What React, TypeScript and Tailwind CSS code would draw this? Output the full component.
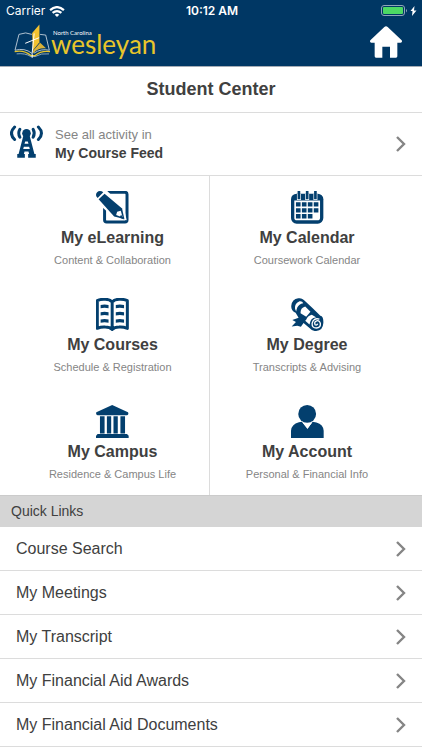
import type { ReactNode } from "react";

const tiles = [
  { title: "My eLearning", text: "Content & Collaboration", icon: <PencilIcon /> },
  { title: "My Calendar", text: "Coursework Calendar", icon: <CalendarIcon /> },
  { title: "My Courses", text: "Schedule & Registration", icon: <BookIcon /> },
  { title: "My Degree", text: "Transcripts & Advising", icon: <DiplomaIcon /> },
  { title: "My Campus", text: "Residence & Campus Life", icon: <CampusIcon /> },
  { title: "My Account", text: "Personal & Financial Info", icon: <PersonIcon /> },
];

const links = [
  "Course Search",
  "My Meetings",
  "My Transcript",
  "My Financial Aid Awards",
  "My Financial Aid Documents",
];

function Icon({ children }: { children: ReactNode }) {
  return (
    <svg viewBox="0 0 100 100" className="size-[33px] shrink-0 text-[#033f6e]" fill="currentColor" aria-hidden="true">
      {children}
    </svg>
  );
}

function TowerIcon() {
  return (
    <Icon>
      <circle cx="50" cy="25" r="13" />
      <path d="M41 30h18l15 58h4v11H55V88h3l-2-8H44l-2 8h3v11H22V88h4z" />
      <path d="M46 50h8l2 7H44zM42 66h16l2 7H40z" fill="#fff" />
      <g fill="none" stroke="currentColor" strokeWidth="9" strokeLinecap="round">
        <path d="M30 13q-7 12 0 24M70 13q7 12 0 24" />
        <path d="M14 6Q-5 25 14 44M86 6q19 19 0 38" />
      </g>
    </Icon>
  );
}

function PencilIcon() {
  return (
    <Icon>
      <path d="M28 4h60q6 0 6 6v78q0 6-6 6H32q-6 0-6-6V46" fill="none" stroke="currentColor" strokeWidth="9" />
      <path d="M0 8 28 0h6l50 48 9 41-38-7L0 32z" fill="#fff" />
      <path d="M0 12Q1 1 12 0q6 0 10 4L5 21q-5-4-5-9z" />
      <path d="M8 25 26 8l53 45 7 32-31-8z" />
      <path d="m61 73 3-10 11-3 6 20z" fill="#fff" />
      <path d="m76 72 10 14-15-5z" />
    </Icon>
  );
}

function CalendarIcon() {
  return (
    <Icon>
      <rect x="0" y="8" width="98" height="91" rx="17" />
      <path d="M10 29h78v52q0 8-8 8H18q-8 0-8-8z" fill="#fff" />
      <path d="M18 8h12v19H18zM43 8h12v19H43zM68 8h12v19H68z" fill="#fff" />
      <path d="M20 0h8v25h-8zM45 0h8v25h-8zM70 0h8v25h-8z" />
      <path d="M15 34h14v13H15zM33 34h14v13H33zM51 34h14v13H51zM69 34h14v13H69zM15 52h14v13H15zM33 52h14v13H33zM51 52h14v13H51zM69 52h14v13H69zM15 70h14v13H15zM33 70h14v13H33zM51 70h14v13H51z" />
    </Icon>
  );
}

function BookIcon() {
  return (
    <Icon>
      <path
        d="M49 12Q42 4 28 4 14 3 4 8v84q12-5 24-4 14 0 21 7 7-7 21-7 12-1 25 4V8Q84 3 70 4 56 4 49 12zM49 12v82"
        fill="none"
        stroke="currentColor"
        strokeWidth="9"
        strokeLinejoin="round"
      />
      <path d="M14 21q12-3 24 0v10q-12-3-24 0zM14 43q12-3 24 0v10q-12-3-24 0zM14 65q12-3 24 0v10q-12-3-24 0zM60 21q12-3 25 0v10q-13-3-25 0zM60 43q12-3 25 0v10q-13-3-25 0zM60 65q12-3 25 0v10q-13-3-25 0z" />
    </Icon>
  );
}

function DiplomaIcon() {
  return (
    <Icon>
      <path d="M1 23Q3 4 22 1q10-2 17 5l26 24 24 24q10 2 9 22-1 23-22 24-12 1-20-9L38 76l-8 11-11-3-17 2 13-13-11-6 19-7-9-15Q-1 37 1 23z" />
      <path d="M12 31q-1-15 14-21 9-1 11 6-13 2-18 13-3 8-3 12-3-4-4-10z" fill="#fff" />
      <path d="M43 26 59 42 46 57 29 46q-1-16 14-20z" fill="#fff" />
      <path d="M46 66q4-12 17-15l14 8Q60 57 56 80L43 69z" fill="#fff" />
      <path d="M86 64q-18-5-22 13-1 14 13 14 13-1 12-13-2-11-11-9-9 3-5 12 5 3 8-3" fill="none" stroke="#fff" strokeWidth="4" />
    </Icon>
  );
}

function CampusIcon() {
  return (
    <Icon>
      <path d="M49 0 97 22q3 8-3 9H5q-6-1-4-9z" />
      <path d="M12 34h14v52H12zM33 34h13v52H33zM53 34h13v52H53zM74 34h14v52H74z" />
      <path d="M5 88h89l5 5v7H0v-7z" />
    </Icon>
  );
}

function PersonIcon() {
  return (
    <Icon>
      <circle cx="49" cy="27" r="27" />
      <path d="M0 100V78q1-20 24-26l9-1 17 22 15-22 12 2q21 6 22 25v22z" />
      <path d="M34 52q16 8 31 0L50 71z" fill="#fff" />
    </Icon>
  );
}

function Chevron() {
  return (
    <svg
      viewBox="0 0 10 16"
      className="h-4 w-2.5 shrink-0 self-center"
      fill="none"
      stroke="#858585"
      strokeWidth="2.4"
      aria-hidden="true"
    >
      <path d="m1 1 7 7-7 7" />
    </svg>
  );
}

function StatusBar() {
  return (
    <div className="grid h-5 grid-cols-3 items-center pt-0.5 pr-1 pl-1.5 font-['Inter',sans-serif] text-xs">
      <div className="flex items-center gap-1">
        <span>Carrier</span>
        <svg viewBox="0 0 14 10" className="h-[11px] w-4" fill="none" stroke="currentColor" strokeWidth="2" aria-hidden="true">
          <path d="M.7 3.8q6.3-5.6 12.6 0M3 6.3q4-3.4 8 0" />
          <path d="M7 10 4.9 7.9q2.1-1.6 4.2 0z" fill="currentColor" stroke="none" />
        </svg>
      </div>
      <span className="text-center font-semibold">10:12 AM</span>
      <svg viewBox="0 0 37 12" className="h-3 w-[37px] justify-self-end" aria-hidden="true">
        <rect x="0.5" y="0.5" width="23" height="10" rx="2.5" fill="none" stroke="#8fa5b8" />
        <rect x="2" y="2" width="20" height="7" rx="1" fill="#4cd964" />
        <path d="M25 4q2 1.500 0 3.500z" fill="#8fa5b8" />
        <path d="m33.500 1-4 5h2L31 11l4.500-5.500h-2.500z" fill="#fff" />
      </svg>
    </div>
  );
}

function Logo() {
  return (
    <a href="#" className="flex items-start" aria-label="North Carolina Wesleyan">
      <svg viewBox="0 0 112 105" className="h-[35px] w-[37px]" fill="none" aria-hidden="true">
        <path d="M54 31Q36 22 15 31L3 79q29-8 51 9M79 31l17 2 11 46Q82 73 60 88" stroke="#d3dde5" strokeWidth="2.500" />
        <path d="M2 83q29-6 49 12h13q18-16 45-12" stroke="#e8c52b" strokeWidth="4" />
        <path d="M8 90q26-3 43 8h13q18-11 42-8" stroke="#d3dde5" strokeWidth="2" />
        <path d="M55 27 77 1v54L57 80z" fill="#f2c230" />
        <path d="M57 81 79 56l18 17q-23-3-39 15z" fill="#d9b23a" />
        <path d="m34 58 42-17M61 28l-6 60v14" stroke="#fff" strokeWidth="3" />
      </svg>
      <span className="flex flex-col pt-1.5 font-['Lato',sans-serif]">
        <span className="pl-0.5 text-[6px] leading-[6px] text-white">North Carolina</span>
        <span className="text-[26px] leading-4 text-[#e8c52b]">wesleyan</span>
      </span>
    </a>
  );
}

export default function App() {
  return (
    <div className="bg-white font-['Liberation_Sans',Arial,sans-serif] text-[#404040]">
      <header className="border-b border-[#a5acb5] bg-[#003764] text-white">
        <StatusBar />
        <div className="flex h-[46px] items-start justify-between pt-1 pr-5 pl-3.5">
          <Logo />
          <button type="button" aria-label="Home" className="mt-0.5">
            <svg viewBox="0 0 96 96" className="size-8" fill="#fff" aria-hidden="true">
              <path d="M43 3q5-5 10 0l42 40q3 6-3 7H82v41q0 4-4 4H60V62H37v33H18q-4 0-4-4V50H4q-6-1-3-7z" />
            </svg>
          </button>
        </div>
      </header>

      <main>
        <h1 className="border-b border-[#dcdcdc] text-center text-lg leading-[45px] font-bold">Student Center</h1>

        <a href="#" className="flex items-start gap-3 border-b border-[#dcdcdc] py-3 pr-4 pl-2.5">
          <TowerIcon />
          <span className="flex-1 text-[13px] leading-[19px] text-[#858585]">
            See all activity in
            <strong className="block text-sm leading-[19px] text-[#404040]">My Course Feed</strong>
          </span>
          <Chevron />
        </a>

        <nav className="grid grid-cols-2 grid-rows-[107px_107px_105px] pr-0.5" aria-label="Student services">
          {tiles.map((tile) => (
            <a
              key={tile.title}
              href="#"
              className="flex flex-col items-center pt-[15px] odd:border-r odd:border-[#dcdcdc] odd:pl-4 even:pr-4"
            >
              {tile.icon}
              <span className="mt-1 text-base leading-5 font-bold">{tile.title}</span>
              <span className="mt-1 text-[11px] leading-4 text-[#858585]">{tile.text}</span>
            </a>
          ))}
        </nav>

        <h2 className="border-t border-[#cbcbcb] bg-[#d5d5d5] px-[11px] text-sm leading-[31px]">Quick Links</h2>
        <ul>
          {links.map((link) => (
            <li key={link} className="border-b border-[#dcdcdc]">
              <a href="#" className="flex h-[43px] items-center justify-between px-4">
                {link}
                <Chevron />
              </a>
            </li>
          ))}
        </ul>
      </main>
    </div>
  );
}
